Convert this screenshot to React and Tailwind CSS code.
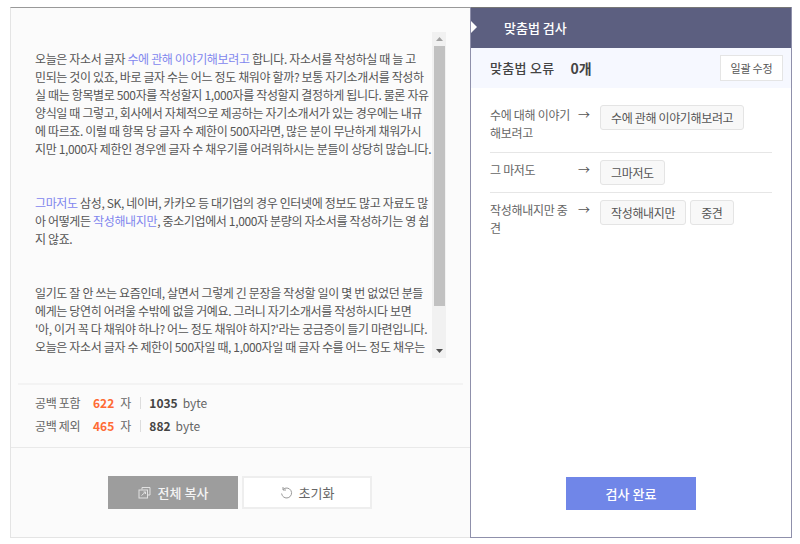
const LINK = "text-[#7f86ee]";
function Para({ children }) {
  return <p className="mb-9 whitespace-nowrap">{children}</p>;
}
function Chip({ children }) {
  return <span className="h-[25px] px-[10px] flex items-center rounded-[3px] border border-[#e4e4e4] bg-[#f8f8f8] text-[12px] tracking-[-0.35px] text-[#555] whitespace-nowrap">{children}</span>;
}
function Row({ from, chips, className }) {
  return (
    <div className={`flex items-start ${className}`}>
      <div className="w-[88px] text-[12px] leading-[18px] tracking-[-0.3px] text-[#666] pt-[1px] shrink-0">{from}</div>
      <div className="w-[22px] text-[12px] leading-[18px] text-[#555] pt-[1px] shrink-0">→</div>
      <div className="flex gap-[4px]">{chips.map((c) => <Chip key={c}>{c}</Chip>)}</div>
    </div>
  );
}
export default function App() {
  return (
    <div className="w-[800px] h-[544px] bg-white pt-[7px] pl-[10px] font-['Noto_Sans_CJK_KR','Noto_Sans',sans-serif]">
      <div className="flex w-[782px] h-[531px]">
        <div className="w-[460px] flex flex-col bg-[#fbfbfb] border-l border-b border-t border-l-[#e4e4e4] border-b-[#e4e4e4] border-t-[#999]">
          <div className="h-[375px] pt-[24px] pl-[24px] flex">
            <div className="w-[397px] h-[326px] overflow-hidden pt-[18px] text-[12px] leading-[18px] text-[#555] tracking-[-0.36px]">
              <Para>오늘은 자소서 글자 <span className={LINK}>수에 관해 이야기해보려고</span> 합니다. 자소서를 작성하실 때 늘 고<br />민되는 것이 있죠, 바로 글자 수는 어느 정도 채워야 할까? 보통 자기소개서를 작성하<br />실 때는 항목별로 500자를 작성할지 1,000자를 작성할지 결정하게 됩니다. 물론 자유<br />양식일 때 그렇고, 회사에서 자체적으로 제공하는 자기소개서가 있는 경우에는 내규<br />에 따르죠. 이럴 때 항목 당 글자 수 제한이 500자라면, 많은 분이 무난하게 채워가시<br />지만 1,000자 제한인 경우엔 글자 수 채우기를 어려워하시는 분들이 상당히 많습니다.</Para>
              <Para><span className={LINK}>그마저도</span> 삼성, SK, 네이버, 카카오 등 대기업의 경우 인터넷에 정보도 많고 자료도 많<br />아 어떻게든 <span className={LINK}>작성해내지만</span>, 중소기업에서 1,000자 분량의 자소서를 작성하기는 영 쉽<br />지 않죠.</Para>
              <Para>일기도 잘 안 쓰는 요즘인데, 살면서 그렇게 긴 문장을 작성할 일이 몇 번 없었던 분들<br />에게는 당연히 어려울 수밖에 없을 거예요. 그러니 자기소개서를 작성하시다 보면<br />'아, 이거 꼭 다 채워야 하나? 어느 정도 채워야 하지?'라는 궁금증이 들기 마련입니다.<br />오늘은 자소서 글자 수 제한이 500자일 때, 1,000자일 때 글자 수를 어느 정도 채우는</Para>
            </div>
            <div className="w-[14px] h-[326px] bg-[#f1f1f1] flex flex-col items-center">
              <div className="h-[14px] flex items-center justify-center">
                <svg width="7" height="4" viewBox="0 0 7 4"><path d="M3.5 0 7 4H0z" fill="#a3a3a3" /></svg>
              </div>
              <div className="w-[11px] h-[260px] bg-[#c1c1c1]" />
              <div className="flex-1 flex items-end pb-[5px]">
                <svg width="7" height="4" viewBox="0 0 7 4"><path d="M3.5 4 7 0H0z" fill="#505050" /></svg>
              </div>
            </div>
          </div>
          <div className="mx-[7px] h-[2px] bg-[#f3f3f3]" />
          <div className="h-[63px] pl-[24px] pt-[6px] border-b border-[#e9e9e9] text-[12px] leading-[23px] text-[#666]">
            <div className="flex items-center">
              <span className="w-[58px] tracking-[-0.3px]">공백 포함</span>
              <span className="font-bold text-[#ff6b35]">622</span>
              <span className="ml-[6px]">자</span>
              <span className="w-px h-[12px] bg-[#ddd] ml-[9px] mr-[8px]" />
              <span className="font-bold text-[#444]">1035</span>
              <span className="ml-[5px]">byte</span>
            </div>
            <div className="flex items-center">
              <span className="w-[58px] tracking-[-0.3px]">공백 제외</span>
              <span className="font-bold text-[#ff6b35]">465</span>
              <span className="ml-[6px]">자</span>
              <span className="w-px h-[12px] bg-[#ddd] ml-[9px] mr-[8px]" />
              <span className="font-bold text-[#444]">882</span>
              <span className="ml-[5px]">byte</span>
            </div>
          </div>
          <div className="flex gap-[4px] pl-[97px] pt-[28px]">
            <button className="w-[130px] h-[33px] bg-[#9d9d9d] text-[#f4f4f4] text-[13px] font-medium flex items-center justify-center gap-[7px]">
              <svg width="13" height="13" viewBox="0 0 13 13" fill="none" stroke="#e2e2e2" strokeWidth="1"><path d="M4 3.5V1.5h8v7.5h-2" /><rect x="1" y="4" width="8.5" height="8" /><path d="M3.5 9.5 7.5 6M5.5 6h2v2" /></svg>
              전체 복사
            </button>
            <button className="w-[130px] h-[33px] bg-white border-2 border-[#eeeeee] text-[#666] text-[13px] flex items-center justify-center gap-[6px]">
              <svg width="13" height="13" viewBox="0 0 13 13" fill="none" stroke="#999" strokeWidth="1"><path d="M3 3.5A5 5 0 1 1 1.6 7.5" /><path d="M3 1v3h3" /></svg>
              초기화
            </button>
          </div>
        </div>
        <div className="relative w-[322px] flex flex-col border-x border-b border-[#8f90ab] bg-white">
          <div className="h-[41px] bg-[#5c5f80] flex items-center pl-[33px] text-[13px] font-medium text-white border-t border-[#777]">맞춤법 검사</div>
          <div className="absolute left-0 top-[14px] w-0 h-0 border-y-[6px] border-y-transparent border-l-[6px] border-l-white" />
          <div className="h-[40px] bg-[#f6f8ff] flex items-center pl-[19px] pr-[8px] shrink-0">
            <span className="text-[13px] font-medium tracking-[0.3px] text-[#444]">맞춤법 오류</span>
            <span className="text-[14px] font-bold text-[#444] ml-[16px]">0개</span>
            <span className="ml-auto w-[63px] h-[26px] flex items-center justify-center bg-white border border-[#e5e5e5] text-[11px] tracking-[-0.2px] text-[#555]">일괄 수정</span>
          </div>
          <div className="flex-1 flex flex-col px-[19px] pt-[17px]">
            <Row className="pb-[10px] border-b border-[#e6e6e6]" from="수에 대해 이야기해보려고" chips={["수에 관해 이야기해보려고"]} />
            <Row className="pt-[7px] pb-[7px] border-b border-[#e6e6e6]" from="그 마저도" chips={["그마저도"]} />
            <Row className="pt-[7px]" from="작성해내지만 중견" chips={["작성해내지만", "중견"]} />
            <div className="mt-auto mb-[27px] flex justify-center">
              <button className="w-[130px] h-[33px] bg-[#7086e8] text-white text-[13px] font-medium">검사 완료</button>
            </div>
          </div>
        </div>
      </div>
    </div>
  );
}
